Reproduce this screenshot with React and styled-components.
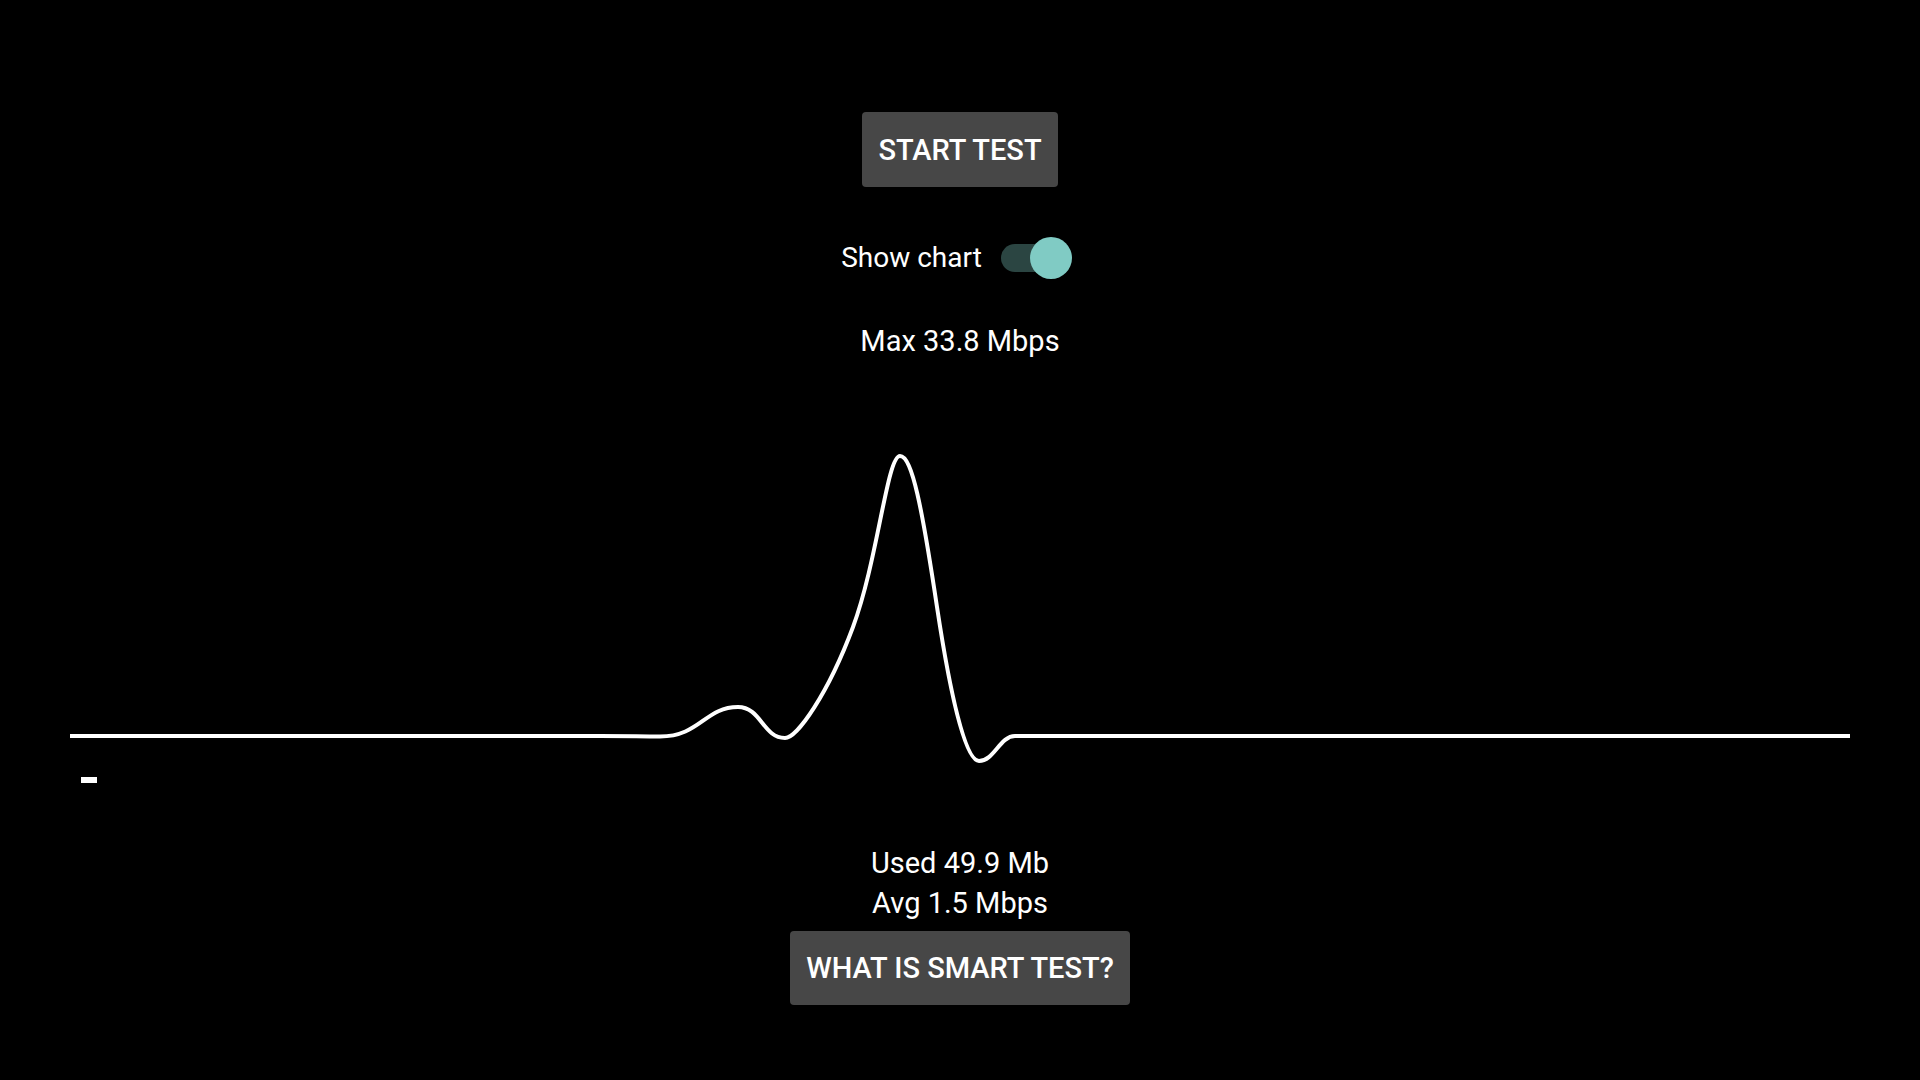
import React from 'react'
import styled, { createGlobalStyle } from 'styled-components'

const GlobalStyle = createGlobalStyle`
  html, body {
    margin: 0;
    padding: 0;
    background: #000;
  }

  body {
    font-family: Roboto, "Noto Sans", "Liberation Sans", sans-serif;
    color: #fff;
  }
`

const Screen = styled.div`
  width: 1920px;
  height: 1080px;
  display: flex;
  flex-direction: column;
  align-items: center;
  padding-top: 112px;
  box-sizing: border-box;
  overflow: hidden;
  background: #000;
`

const Button = styled.button`
  height: ${(p) => p.height || 75}px;
  margin-top: ${(p) => p.offset || 0}px;
  padding: 0 16px;
  border: none;
  border-radius: 4px;
  background: #474747;
  color: #fff;
  font-family: Roboto, "Liberation Sans", sans-serif;
  font-size: 29px;
  font-weight: 500;
  letter-spacing: 0;
  text-transform: uppercase;
  cursor: pointer;
`

const ToggleRow = styled.div`
  display: flex;
  align-items: center;
  gap: 19px;
  height: 42px;
  margin-top: 50px;
  margin-left: -14px;
`

const Label = styled.span`
  font-size: 28px;
  line-height: 34px;
`

const Track = styled.div`
  position: relative;
  width: 64px;
  height: 28px;
  border-radius: 14px;
  background: #2b4542;
`

const Thumb = styled.div`
  position: absolute;
  top: -7px;
  right: -7px;
  width: 42px;
  height: 42px;
  border-radius: 50%;
  background: #80cbc4;
`

const Stat = styled.div`
  font-size: 29px;
  line-height: ${(p) => p.lineHeight || 34}px;
  margin-top: ${(p) => p.offset || 0}px;
  text-align: center;
`

const Chart = styled.svg`
  display: block;
  width: 1920px;
  height: 440px;
  flex: none;
`

// speed curve, drawn in page coordinates
const curve = [
  'M 70 736',
  'L 600 736',
  'C 630 736, 640 736.5, 660 736.5',
  'C 700 736.5, 705 707, 738 707',
  'C 761 707, 763 738, 785 738',
  'C 797 738, 828 694, 853 627',
  'C 878 559.5, 887 456, 900 456',
  'C 912 456, 922 507, 937 607',
  'C 950 693, 965 761, 979 761',
  'C 994 761, 1000 736, 1015 736',
  'L 1850 736'
].join(' ')

const App = () => (
  <>
    <GlobalStyle />
    <Screen>
      <Button>Start test</Button>
      <ToggleRow>
        <Label>Show chart</Label>
        <Track>
          <Thumb />
        </Track>
      </ToggleRow>
      <Stat offset={45}>Max 33.8 Mbps</Stat>
      <Chart viewBox="0 358 1920 440">
        <path d={curve} fill="none" stroke="#fff" strokeWidth="4" strokeLinejoin="round" />
        <rect x="81" y="777" width="16" height="6" fill="#fff" />
      </Chart>
      <Stat offset={45} lineHeight={40}>Used 49.9 Mb</Stat>
      <Stat lineHeight={40}>Avg 1.5 Mbps</Stat>
      <Button height={74} offset={8}>What is smart test?</Button>
    </Screen>
  </>
)

export default App
